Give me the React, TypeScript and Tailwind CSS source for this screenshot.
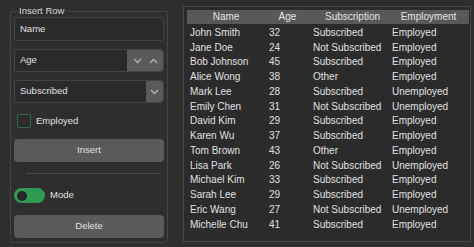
import React from "react";

const rows: [string, number, string, string][] = [
  ["John Smith", 32, "Subscribed", "Employed"],
  ["Jane Doe", 24, "Not Subscribed", "Employed"],
  ["Bob Johnson", 45, "Subscribed", "Employed"],
  ["Alice Wong", 38, "Other", "Employed"],
  ["Mark Lee", 28, "Subscribed", "Unemployed"],
  ["Emily Chen", 31, "Not Subscribed", "Unemployed"],
  ["David Kim", 29, "Subscribed", "Employed"],
  ["Karen Wu", 37, "Subscribed", "Employed"],
  ["Tom Brown", 43, "Other", "Employed"],
  ["Lisa Park", 26, "Not Subscribed", "Unemployed"],
  ["Michael Kim", 33, "Subscribed", "Employed"],
  ["Sarah Lee", 29, "Subscribed", "Employed"],
  ["Eric Wang", 27, "Not Subscribed", "Unemployed"],
  ["Michelle Chu", 41, "Subscribed", "Employed"],
];

function Chevron({ up }: { up?: boolean }) {
  return (
    <svg width="9" height="6" viewBox="0 0 9 6" fill="none">
      <path
        d={up ? "M1 5 L4.5 1.5 L8 5" : "M1 1 L4.5 4.5 L8 1"}
        stroke="#b5b5b5"
        strokeWidth="1.3"
      />
    </svg>
  );
}

export default function App() {
  return (
    <div className="w-[474px] h-[247px] bg-[#2e2e2e] flex font-['Liberation_Sans',Arial,sans-serif] text-[#e0e0e0] overflow-hidden">
      <fieldset className="ml-[10px] mt-[5px] w-[158px] h-[238px] border border-[#454545] rounded-[3px] px-[3px] flex flex-col">
        <legend className="ml-[4px] px-px text-[9.5px] leading-[12px] text-[#dadada]">Insert Row</legend>
        <div className="h-[24px] rounded-[3px] border border-[#444] bg-[#2a2a2a] flex items-center pl-[5px] text-[9.5px]">
          Name
        </div>
        <div className="mt-[8px] h-[23px] rounded-[3px] border border-[#444] bg-[#2a2a2a] flex items-stretch text-[9.5px]">
          <div className="flex-1 flex items-center pl-[5px]">Age</div>
          <div className="w-[36px] bg-[#5a5a5a] rounded-r-[3px] flex items-center justify-around px-[2px]">
            <Chevron />
            <Chevron up />
          </div>
        </div>
        <div className="mt-[8px] h-[23px] rounded-[3px] border border-[#444] bg-[#2a2a2a] flex items-stretch text-[9.5px]">
          <div className="flex-1 flex items-center pl-[5px]">Subscribed</div>
          <div className="w-[17px] bg-[#5a5a5a] rounded-r-[3px] flex items-center justify-center">
            <Chevron />
          </div>
        </div>
        <div className="mt-[11px] h-[14px] flex items-center text-[9.5px]">
          <div className="ml-[3px] w-[14px] h-[14px] rounded-[2px] border-[1.5px] border-[#2f6646] bg-[#2b2b2b] flex items-center justify-center">
            <div className="w-[4px] h-[4px] rounded-full bg-[#4a2a2c]" />
          </div>
          <span className="ml-[5px]">Employed</span>
        </div>
        <div className="mt-[11px] h-[23px] rounded-[4px] bg-[#5a5a5a] flex items-center justify-center text-[9.5px]">
          Insert
        </div>
        <div className="mt-[11px] h-px bg-[#4a4a4a] ml-[12px] mr-[4px]" />
        <div className="mt-[14px] h-[15px] flex items-center text-[9.5px]">
          <div className="w-[31px] h-[15px] rounded-full bg-[#2e9a52] flex items-center pl-[3px]">
            <div className="w-[10px] h-[10px] rounded-full bg-[#262626]" />
          </div>
          <span className="ml-[5px]">Mode</span>
        </div>
        <div className="mt-[12px] h-[23px] rounded-[4px] bg-[#5a5a5a] flex items-center justify-center text-[9.5px]">
          Delete
        </div>
      </fieldset>
      <div className="ml-[15px] mt-[6px] w-[288px] h-[236px] border border-[#474747] bg-[#2b2b2b] pt-[3px] pl-[3px] pr-px">
        <div className="flex h-[14px] bg-[#585858] text-[10px] text-[#e4e4e4] leading-[14px]">
          <div className="w-[78px] text-center">Name</div>
          <div className="w-[45px] text-center">Age</div>
          <div className="w-[79px] text-center pl-[6px]">Subscription</div>
          <div className="w-[79px] text-center">Employment</div>
        </div>
        <div className="mt-px">
          {rows.map(([n, a, s, e]) => (
            <div key={n} className="flex h-[14.75px] items-center text-[10px]">
              <div className="w-[78px] pl-[3px]">{n}</div>
              <div className="w-[45px] pl-[4px]">{a}</div>
              <div className="w-[79px] pl-[3px]">{s}</div>
              <div className="w-[79px] pl-[3px]">{e}</div>
            </div>
          ))}
        </div>
      </div>
    </div>
  );
}
